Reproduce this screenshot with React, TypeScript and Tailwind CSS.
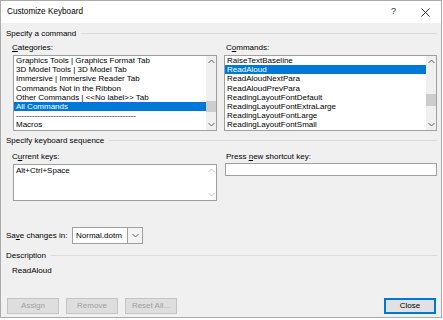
import React from 'react';

const categories = [
  'Graphics Tools | Graphics Format Tab',
  '3D Model Tools | 3D Model Tab',
  'Immersive | Immersive Reader Tab',
  'Commands Not in the Ribbon',
  'Other Commands | <<No label>> Tab',
  'All Commands',
  '---------------------------------------------',
  'Macros',
];

const commands = [
  'RaiseTextBaseline',
  'ReadAloud',
  'ReadAloudNextPara',
  'ReadAloudPrevPara',
  'ReadingLayoutFontDefault',
  'ReadingLayoutFontExtraLarge',
  'ReadingLayoutFontLarge',
  'ReadingLayoutFontSmall',
];

const Chevron = ({ up, light }: { up?: boolean; light?: boolean }) => (
  <svg width="7" height="5" viewBox="0 0 7 5">
    <path
      d={up ? 'M0.5 4 L3.5 1 L6.5 4' : 'M0.5 1 L3.5 4 L6.5 1'}
      fill="none"
      stroke={light ? '#c2c2c2' : '#606060'}
      strokeWidth="1"
    />
  </svg>
);

const ScrollBar = ({ gap, thumb }: { gap: number; thumb: number }) => (
  <div className="w-[10px] bg-[#f0f0f0] flex flex-col">
    <div className="h-[11px] flex items-center justify-center">
      <Chevron up />
    </div>
    <div className="flex-1 flex flex-col">
      <div style={{ height: gap }} />
      <div className="bg-[#cdcdcd]" style={{ height: thumb }} />
    </div>
    <div className="h-[11px] flex items-center justify-center">
      <Chevron />
    </div>
  </div>
);

const ListBox = ({ items, selected, gap, thumb }: { items: string[]; selected: number; gap: number; thumb: number }) => (
  <div className="h-[76px] border border-[#a0a0a0] bg-white flex">
    <div className="flex-1 overflow-hidden">
      {items.map((t, i) => (
        <div
          key={i}
          className={
            i === selected
              ? 'h-[9.2px] leading-[9.2px] pl-[2px] whitespace-nowrap bg-[#0078d7] text-white'
              : 'h-[9.2px] leading-[9.2px] pl-[2px] whitespace-nowrap'
          }
        >
          {t}
        </div>
      ))}
    </div>
    <ScrollBar gap={gap} thumb={thumb} />
  </div>
);

const GroupHeader = ({ title }: { title: string }) => (
  <div className="flex items-center h-[11px] leading-[11px]">
    <span>{title}</span>
    <div className="flex-1 h-px bg-[#dcdcdc] ml-[5px]" />
  </div>
);

const DisabledButton = ({ label }: { label: string }) => (
  <div className="w-[52px] h-[16px] border border-[#c4c4c4] bg-[#dedede] text-[#a0a0a0] flex items-center justify-center">
    {label}
  </div>
);

export default function App() {
  return (
    <div className="w-[443px] h-[320px] bg-white overflow-hidden font-['Liberation_Sans',Arial,sans-serif] text-[8px] text-black">
      <div className="w-[442px] h-[318px] border border-[#aaaaaa] flex flex-col">
        <div className="h-[22px] bg-white flex items-center pl-[6px]">
          <span className="text-[8.2px]">Customize Keyboard</span>
          <span className="ml-auto text-[9px] text-[#222]">?</span>
          <svg className="ml-[25px] mr-[11px]" width="9" height="9" viewBox="0 0 9 9">
            <path d="M0.5 0.5 L8.5 8.5 M8.5 0.5 L0.5 8.5" stroke="#111" strokeWidth="0.9" />
          </svg>
        </div>

        <div className="flex-1 bg-[#f0f0f0] pl-[5px] pr-[4px] flex flex-col">
          <div className="mt-[5px]">
            <GroupHeader title="Specify a command" />
          </div>
          <div className="ml-[7px] flex gap-[7px] mt-[3px]">
            <div className="w-[204px]">
              <div className="h-[11px] leading-[11px] -ml-px">
                <u>C</u>ategories:
              </div>
              <div className="mt-[2px]">
                <ListBox items={categories} selected={5} gap={34} thumb={11} />
              </div>
            </div>
            <div className="w-[213px]">
              <div className="h-[11px] leading-[11px] ml-[2px]">
                C<u>o</u>mmands:
              </div>
              <div className="mt-[2px]">
                <ListBox items={commands} selected={1} gap={27} thumb={12} />
              </div>
            </div>
          </div>

          <div className="mt-[4px]">
            <GroupHeader title="Specify keyboard sequence" />
          </div>
          <div className="ml-[7px] flex gap-[7px] mt-[5px]">
            <div className="w-[204px]">
              <div className="h-[11px] leading-[11px] -ml-px">
                C<u>u</u>rrent keys:
              </div>
              <div className="mt-[2px] h-[37px] border border-[#a0a0a0] bg-white flex">
                <div className="flex-1 pl-[2px] pt-px leading-[9.2px]">Alt+Ctrl+Space</div>
                <div className="w-[10px] flex flex-col justify-between py-[3px] items-center">
                  <Chevron up light />
                  <Chevron light />
                </div>
              </div>
            </div>
            <div className="w-[213px]">
              <div className="h-[11px] leading-[11px] ml-[2px]">
                Press <u>n</u>ew shortcut key:
              </div>
              <div className="mt-[1px] ml-px h-[13px] border border-[#a0a0a0] bg-white" />
            </div>
          </div>

          <div className="flex items-center mt-[26px]">
            <div className="w-[66px]">
              Sa<u>v</u>e changes in:
            </div>
            <div className="w-[71px] h-[17px] border border-[#a0a0a0] bg-white flex">
              <div className="flex-1 pl-[3px] flex items-center">Normal.dotm</div>
              <div className="w-[15px] border-l border-[#a0a0a0] bg-[#f4f4f4] flex items-center justify-center">
                <Chevron />
              </div>
            </div>
          </div>

          <div className="mt-[6px]">
            <GroupHeader title="Description" />
          </div>
          <div className="mt-[4px] ml-[6px] h-[11px] leading-[11px]">ReadAloud</div>

          <div className="mt-[22px] flex items-center">
            <div className="ml-px flex gap-[7px]">
              <DisabledButton label="Assign" />
              <DisabledButton label="Remove" />
              <DisabledButton label="Reset All..." />
            </div>
            <div className="ml-auto mr-px w-[52px] h-[16px] border-2 border-[#0078d7] bg-[#e1e1e1] flex items-center justify-center">
              Close
            </div>
          </div>
        </div>
      </div>
    </div>
  );
}
